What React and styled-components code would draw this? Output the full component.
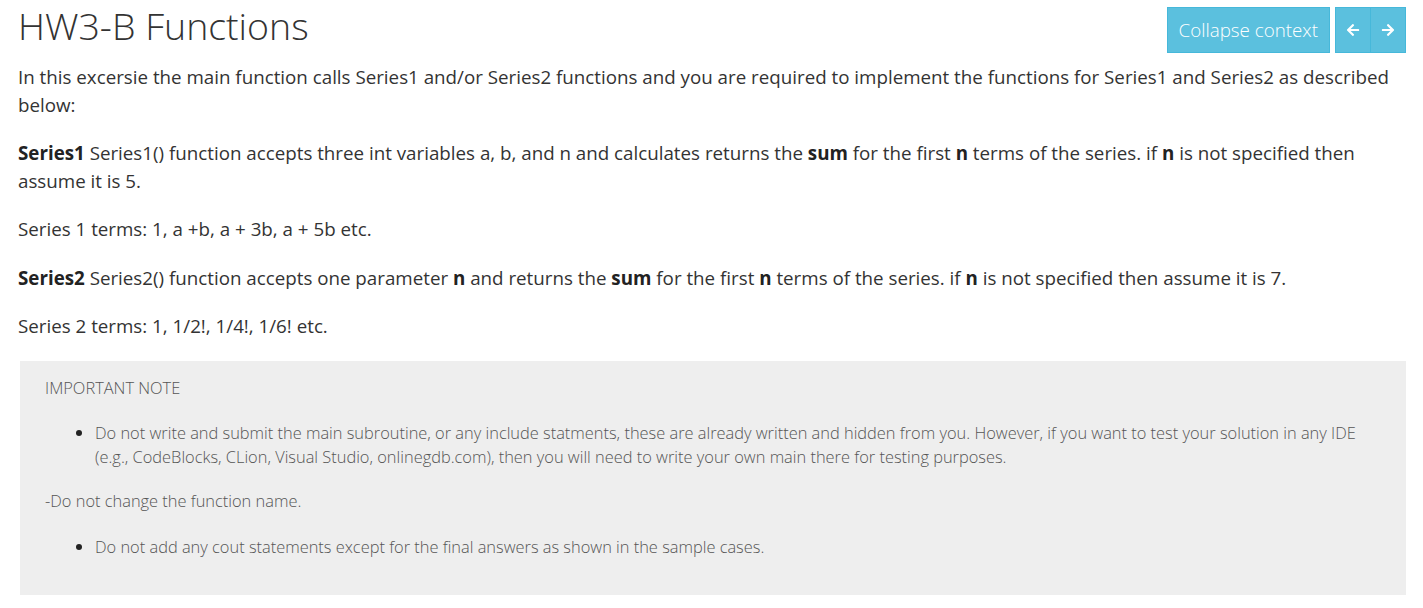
import React from "react";
import styled, { createGlobalStyle } from "styled-components";
import { FaArrowLeft, FaArrowRight } from "react-icons/fa";

const GlobalStyle = createGlobalStyle`
  html, body {
    margin: 0;
    padding: 0;
    background: #fff;
  }
  body {
    font-family: "Open Sans", "Noto Sans", sans-serif;
    color: #333;
  }
`;

const Page = styled.div`
  padding: 0 17px 0 18px;
`;

const Header = styled.div`
  display: flex;
  justify-content: space-between;
  align-items: flex-start;
  padding-top: 7px;
`;

const Title = styled.h1`
  margin: 0;
  font-size: 37.5px;
  font-weight: 300;
  line-height: 40px;
  color: #333;
  margin-top: -1px;
`;

const Actions = styled.div`
  display: flex;
  gap: 5px;
`;

const Button = styled.button`
  display: flex;
  align-items: center;
  justify-content: center;
  height: 46px;
  padding: 0 ${(p) => (p.$icon ? "0" : "11px")};
  width: ${(p) => (p.$icon ? "36px" : "auto")};
  background: #5bc0de;
  border: 1px solid #46b8da;
  color: #fff;
  font-family: "Open Sans", sans-serif;
  font-size: 18.8px;
  font-weight: 300;
  cursor: pointer;
`;

const Group = styled.div`
  display: flex;
  & > button + button {
    margin-left: -1px;
  }
`;

const Para = styled.p`
  margin: 0 0 21px;
  font-size: 18.75px;
  line-height: 27.5px;
  color: #333;
  & b {
    color: #222;
    font-weight: 700;
  }
`;

const Intro = styled(Para)`
  margin-top: 10px;
`;

const Note = styled.div`
  background: #eee;
  margin-left: 2px;
  padding: 15px 25px 36px;
  color: #555;
  font-size: 16.4px;
  font-weight: 300;
  line-height: 24px;
`;

const NoteLine = styled.div`
  margin-bottom: ${(p) => p.$gap || 21}px;
`;

const List = styled.ul`
  margin: 0 0 ${(p) => p.$gap || 0}px;
  padding-left: 50px;
  list-style: disc;
  & li::marker {
    color: #222;
  }
`;

export default function App() {
  return (
    <>
      <GlobalStyle />
      <Page>
        <Header>
          <Title>HW3-B Functions</Title>
          <Actions>
            <Button>Collapse context</Button>
            <Group>
              <Button $icon>
                <FaArrowLeft size={14} />
              </Button>
              <Button $icon>
                <FaArrowRight size={14} />
              </Button>
            </Group>
          </Actions>
        </Header>
        <Intro>
          In this excersie the main function calls Series1 and/or Series2 functions and you are required to implement the functions for Series1 and Series2 as described below:
        </Intro>
        <Para>
          <b>Series1</b> Series1() function accepts three int variables a, b, and n and calculates returns the <b>sum</b> for the first <b>n</b> terms of the series. if <b>n</b> is not specified then assume it is 5.
        </Para>
        <Para>Series 1 terms: 1, a +b, a + 3b, a + 5b etc.</Para>
        <Para>
          <b>Series2</b> Series2() function accepts one parameter <b>n</b> and returns the <b>sum</b> for the first <b>n</b> terms of the series. if <b>n</b> is not specified then assume it is 7.
        </Para>
        <Para>Series 2 terms: 1, 1/2!, 1/4!, 1/6! etc.</Para>
        <Note>
          <NoteLine>IMPORTANT NOTE</NoteLine>
          <List $gap={20}>
            <li>
              Do not write and submit the main subroutine, or any include statments, these are already written and hidden from you. However, if you want to test your solution in any IDE (e.g., CodeBlocks, CLion, Visual Studio, onlinegdb.com), then you will need to write your own main there for testing purposes.
            </li>
          </List>
          <NoteLine $gap={22}>-Do not change the function name.</NoteLine>
          <List>
            <li>Do not add any cout statements except for the final answers as shown in the sample cases.</li>
          </List>
        </Note>
      </Page>
    </>
  );
}
